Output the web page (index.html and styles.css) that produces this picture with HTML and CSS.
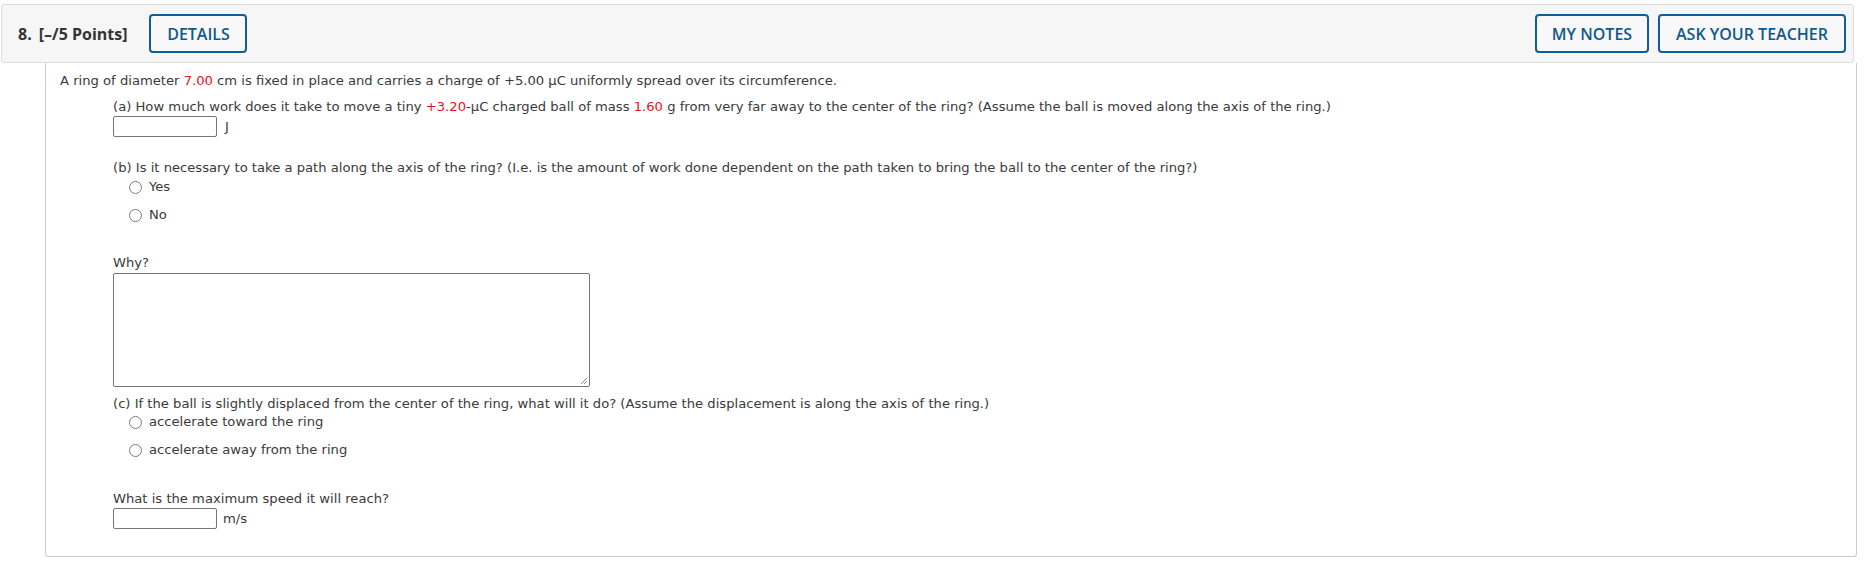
FILE: index.html
```html
<!DOCTYPE html>
<html>
<head>
<meta charset="utf-8">
<link rel="stylesheet" href="styles.css">
</head>
<body>
<div class="question">
  <div class="qhead">
    <div class="qtitle"><span class="qnum">8.</span><span class="pts">[–/5 Points]</span></div>
    <button class="btn btn-details">DETAILS</button>
    <div class="spacer"></div>
    <button class="btn btn-notes">MY NOTES</button>
    <button class="btn btn-ask">ASK YOUR TEACHER</button>
  </div>
  <div class="qbody">
    <p class="intro">A ring of diameter <span class="red">7.00</span> cm is fixed in place and carries a charge of +5.00 μC uniformly spread over its circumference.</p>
    <div class="parts">
      <p class="line line-a">(a) How much work does it take to move a tiny <span class="red">+3.20</span>-μC charged ball of mass <span class="red">1.60</span> g from very far away to the center of the ring? (Assume the ball is moved along the axis of the ring.)</p>
      <div class="answer answer-a"><span class="field"></span><span class="unit">J</span></div>

      <p class="line line-b">(b) Is it necessary to take a path along the axis of the ring? (I.e. is the amount of work done dependent on the path taken to bring the ball to the center of the ring?)</p>
      <div class="choice choice-first"><span class="radio"></span><span class="label">Yes</span></div>
      <div class="choice choice-second"><span class="radio"></span><span class="label">No</span></div>

      <p class="line line-why">Why?</p>
      <div class="textarea"><svg class="grip" width="8" height="8" viewBox="0 0 8 8"><path d="M7 1 L1 7 M7 4 L4 7" stroke="#888" stroke-width="1"/></svg></div>

      <p class="line line-c">(c) If the ball is slightly displaced from the center of the ring, what will it do? (Assume the displacement is along the axis of the ring.)</p>
      <div class="choice choice-first-c"><span class="radio"></span><span class="label">accelerate toward the ring</span></div>
      <div class="choice choice-second"><span class="radio"></span><span class="label">accelerate away from the ring</span></div>

      <p class="line line-max">What is the maximum speed it will reach?</p>
      <div class="answer answer-max"><span class="field"></span><span class="unit">m/s</span></div>
    </div>
  </div>
</div>
</body>
</html>
```
FILE: styles.css
```css
html, body {
  margin: 0;
  padding: 0;
  background: #ffffff;
}

.question {
  margin: 4px 0 0 1px;
  width: 1856px;
}

.qhead {
  display: flex;
  align-items: center;
  box-sizing: border-box;
  width: 1853px;
  height: 59px;
  padding: 0 7px 0 16px;
  background: #f6f6f6;
  border: 1px solid #dddddd;
  border-radius: 3px;
  font-family: "Open Sans", "Liberation Sans", sans-serif;
}

.qtitle {
  font-size: 16px;
  font-weight: 700;
  color: #333333;
  display: flex;
  align-items: center;
}

.qnum {
  margin-right: 7px;
}

.spacer {
  flex: 1;
}

.btn {
  box-sizing: border-box;
  height: 39px;
  padding: 0 10px;
  background: #f8f8f8;
  border: 2px solid #0f5f96;
  border-radius: 4px;
  color: #0e5a8e;
  font-family: "Open Sans", "Liberation Sans", sans-serif;
  font-size: 16px;
  font-weight: 600;
  letter-spacing: 0;
}

.btn-details {
  width: 98px;
  margin-left: 22px;
}

.btn-notes {
  width: 114px;
}

.btn-ask {
  width: 188px;
  margin-left: 9px;
}

.qbody {
  box-sizing: border-box;
  margin-left: 44px;
  width: 1812px;
  height: 494px;
  border: 1px solid #cccccc;
  border-top: none;
  border-radius: 0 0 3px 3px;
  padding: 10px 0 0 14px;
  font-family: "DejaVu Sans", Verdana, sans-serif;
  font-size: 13.15px;
  line-height: 16px;
  color: #3a3a3a;
}

.red {
  color: #e8141b;
}

.intro {
  margin: 0;
}

.parts {
  padding-left: 53px;
}

.line {
  margin: 0;
}

.line-a { margin-top: 10px; }
.line-b { margin-top: 23px; }
.line-why { margin-top: 32px; }
.line-c { margin-top: 9px; }
.line-max { margin-top: 33px; }

.answer {
  display: flex;
  align-items: center;
  margin-top: 1px;
  height: 21px;
}

.field {
  box-sizing: border-box;
  width: 104px;
  height: 21px;
  border: 1px solid #767676;
  border-radius: 2px;
  background: #ffffff;
}

.unit {
  margin-left: 8px;
}

.answer-max .unit {
  margin-left: 6px;
}

.choice {
  display: flex;
  align-items: center;
  height: 16px;
}

.choice-first { margin-top: 3px; }
.choice-first-c { margin-top: 2px; }
.choice-second { margin-top: 12px; }

.radio {
  box-sizing: border-box;
  width: 13px;
  height: 13px;
  margin-left: 16px;
  margin-right: 7px;
  border: 1px solid #7a7a7a;
  border-radius: 50%;
  background: #ffffff;
}

.textarea {
  box-sizing: border-box;
  position: relative;
  margin-top: 2px;
  width: 477px;
  height: 114px;
  border: 1px solid #767676;
  border-radius: 2px;
  background: #ffffff;
}

.grip {
  position: absolute;
  right: 1px;
  bottom: 1px;
}
```
